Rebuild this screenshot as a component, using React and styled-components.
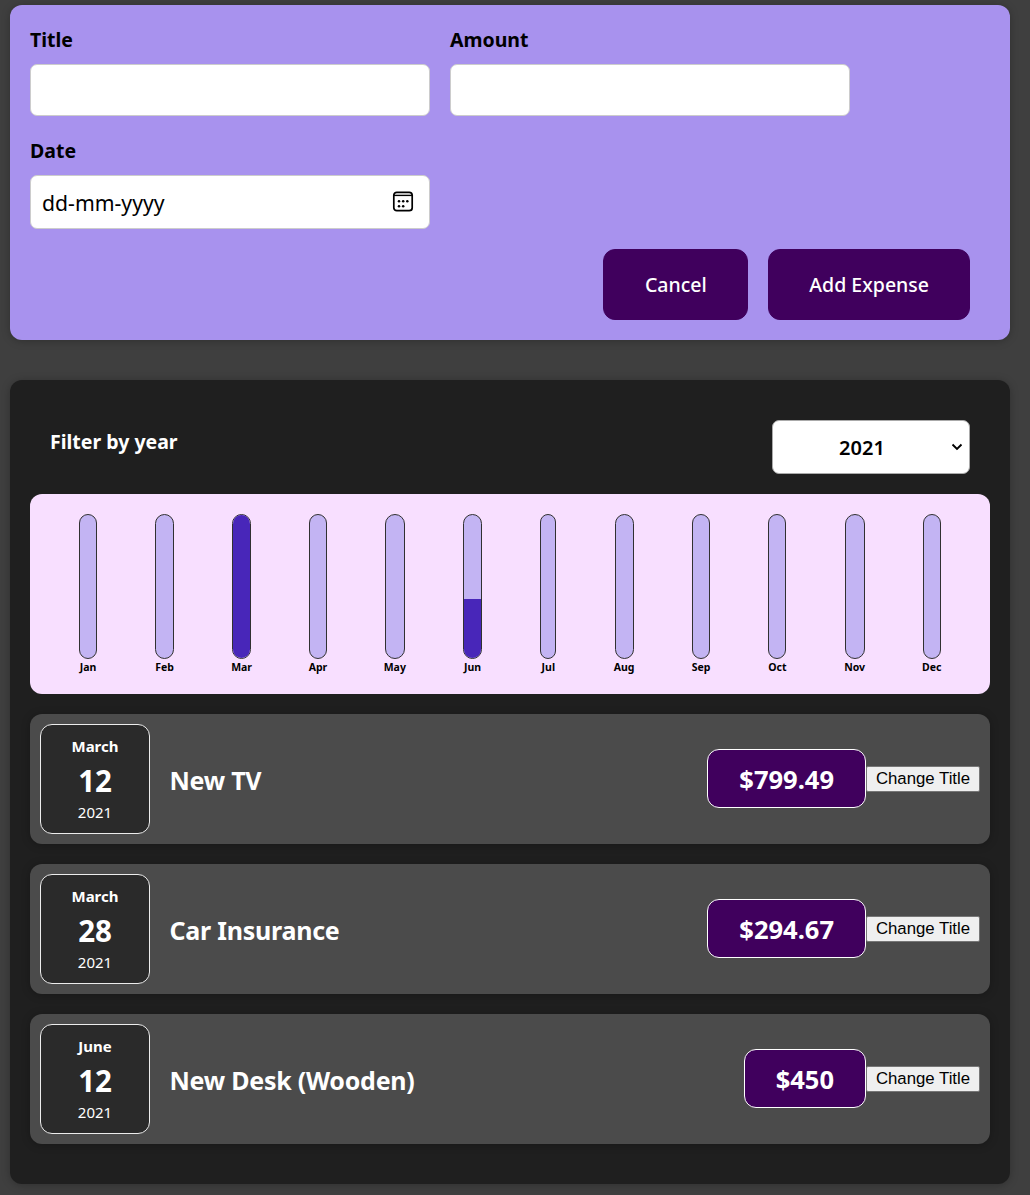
import React from 'react';
import styled, { createGlobalStyle } from 'styled-components';

const expenses = [
  { id: 'e1', title: 'New TV', amount: 799.49, price: '$799.49', month: 'March', day: '12', year: '2021' },
  { id: 'e2', title: 'Car Insurance', amount: 294.67, price: '$294.67', month: 'March', day: '28', year: '2021' },
  { id: 'e3', title: 'New Desk (Wooden)', amount: 450, price: '$450', month: 'June', day: '12', year: '2021' },
];

const months = [
  { label: 'Jan', width: 18 },
  { label: 'Feb', width: 18.6 },
  { label: 'Mar', width: 19, value: 799.49 + 294.67 },
  { label: 'Apr', width: 17.3 },
  { label: 'May', width: 20 },
  { label: 'Jun', width: 19, value: 450 },
  { label: 'Jul', width: 16.2 },
  { label: 'Aug', width: 19 },
  { label: 'Sep', width: 18.4 },
  { label: 'Oct', width: 18 },
  { label: 'Nov', width: 20 },
  { label: 'Dec', width: 18 },
];
const maxValue = 799.49 + 294.67;

const chevron =
  "url(\"data:image/svg+xml,%3Csvg xmlns='http://www.w3.org/2000/svg' width='12' height='8' viewBox='0 0 12 8'%3E%3Cpath d='M1.5 1.5 6 6l4.5-4.5' fill='none' stroke='%23000' stroke-width='1.9'/%3E%3C/svg%3E\")";

const GlobalStyle = createGlobalStyle`
  * {
    box-sizing: border-box;
  }

  body {
    margin: 0;
    background: #3f3f3f;
    font-family: "Noto Sans", "Open Sans", sans-serif;
  }
`;

const CalendarIcon = () => (
  <svg width="24" height="24" viewBox="0 0 24 24" fill="none">
    <rect x="2.8" y="2.3" width="18.4" height="18.4" rx="3" stroke="#000" strokeWidth="1.7" />
    <path d="M3 5.4h18" stroke="#000" strokeWidth="1.4" />
    <g fill="#000">
      <circle cx="8" cy="11.2" r="1.25" />
      <circle cx="12.2" cy="11.2" r="1.25" />
      <circle cx="16.3" cy="11.2" r="1.25" />
      <circle cx="8" cy="16.2" r="1.25" />
      <circle cx="12.2" cy="16.2" r="1.25" />
    </g>
  </svg>
);

export default function App() {
  return (
    <>
      <GlobalStyle />
      <Page>
        <ExpenseForm>
          <Controls>
            <Control>
              <Label>Title</Label>
              <TextInput type="text" />
            </Control>
            <Control>
              <Label>Amount</Label>
              <TextInput type="text" />
            </Control>
            <Control>
              <Label>Date</Label>
              <DateField>
                <span>dd-mm-yyyy</span>
                <CalendarIcon />
              </DateField>
            </Control>
          </Controls>
          <Actions>
            <ActionButton type="button">Cancel</ActionButton>
            <ActionButton type="submit">Add Expense</ActionButton>
          </Actions>
        </ExpenseForm>

        <ExpensesCard>
          <FilterRow>
            <FilterLabel>Filter by year</FilterLabel>
            <YearSelect defaultValue="2021">
              <option>2022</option>
              <option>2021</option>
              <option>2020</option>
              <option>2019</option>
            </YearSelect>
          </FilterRow>

          <Chart>
            {months.map((month) => (
              <ChartBar key={month.label} $width={month.width}>
                <BarTrack>
                  <BarFill style={{ height: `${((month.value || 0) / maxValue) * 100}%` }} />
                </BarTrack>
                <BarLabel>{month.label}</BarLabel>
              </ChartBar>
            ))}
          </Chart>

          <ExpenseList>
            {expenses.map((expense) => (
              <ExpenseItem key={expense.id}>
                <DateBox>
                  <DateMonth>{expense.month}</DateMonth>
                  <DateDay>{expense.day}</DateDay>
                  <DateYear>{expense.year}</DateYear>
                </DateBox>
                <ExpenseTitle>{expense.title}</ExpenseTitle>
                <Price>{expense.price}</Price>
                <ChangeButton type="button">Change Title</ChangeButton>
              </ExpenseItem>
            ))}
          </ExpenseList>
        </ExpensesCard>
      </Page>
    </>
  );
}

const Page = styled.div`
  display: flex;
  flex-direction: column;
  gap: 40px;
  width: 1000px;
  margin-left: 10px;
  padding: 5px 0 11px;
`;

const ExpenseForm = styled.form`
  display: flex;
  flex-direction: column;
  gap: 20px;
  height: 335px;
  padding: 20px 40px 20px 20px;
  background: #a892ee;
  border-radius: 12px;
  box-shadow: 0 1px 8px rgba(0, 0, 0, 0.25);
`;

const Controls = styled.div`
  display: flex;
  flex-wrap: wrap;
  gap: 20px;
`;

const Control = styled.div`
  display: flex;
  flex-direction: column;
  gap: 9px;
  width: 400px;
`;

const Label = styled.label`
  font-size: 19.5px;
  line-height: 30px;
  font-weight: 700;
  color: #000;
`;

const TextInput = styled.input`
  height: 52px;
  padding: 8px;
  background: #fff;
  border: 1px solid #ccc;
  border-radius: 7px;
`;

const DateField = styled.div`
  display: flex;
  align-items: center;
  justify-content: space-between;
  height: 54px;
  padding: 0 14px 0 11px;
  background: #fff;
  border: 1px solid #ccc;
  border-radius: 7px;
  font-size: 21.2px;
  color: #000;
`;

const Actions = styled.div`
  display: flex;
  justify-content: flex-end;
  gap: 20px;
`;

const ActionButton = styled.button`
  min-width: 145px;
  height: 71px;
  padding: 0 40px;
  background: #40005d;
  border: 1px solid #40005d;
  border-radius: 12px;
  color: #fff;
  font-family: inherit;
  font-size: 19.5px;
  font-weight: 500;
`;

const ExpensesCard = styled.div`
  display: flex;
  flex-direction: column;
  gap: 20px;
  padding: 40px 20px;
  background: #1f1f1f;
  border-radius: 12px;
  box-shadow: 0 1px 8px rgba(0, 0, 0, 0.25);
`;

const FilterRow = styled.div`
  display: flex;
  align-items: center;
  justify-content: space-between;
  padding: 0 20px;
  color: #fff;
`;

const FilterLabel = styled.label`
  margin-bottom: 12px;
  font-size: 19.5px;
  font-weight: 700;
`;

const YearSelect = styled.select`
  appearance: none;
  width: 198px;
  height: 54px;
  padding: 0 18px 0 0;
  background: #fff ${chevron} no-repeat right 6px center;
  border: 1px solid #aaa;
  border-radius: 7px;
  color: #000;
  font-family: inherit;
  font-size: 20px;
  font-weight: 600;
  text-align: center;
`;

const Chart = styled.div`
  display: flex;
  justify-content: space-around;
  height: 200px;
  padding: 20px;
  background: #f8dfff;
  border-radius: 12px;
`;

const ChartBar = styled.div`
  display: flex;
  flex-direction: column;
  align-items: center;
  width: ${(props) => props.$width}px;
  height: 100%;
`;

const BarTrack = styled.div`
  display: flex;
  flex-direction: column;
  justify-content: flex-end;
  flex: 1;
  width: 100%;
  overflow: hidden;
  background: #c3b4f3;
  border: 1px solid #313131;
  border-radius: 12px;
`;

const BarFill = styled.div`
  width: 100%;
  background: #4826b9;
`;

const BarLabel = styled.div`
  margin-top: 2px;
  font-size: 10.5px;
  line-height: 13px;
  font-weight: 700;
  text-align: center;
  color: #000;
`;

const ExpenseList = styled.div`
  display: flex;
  flex-direction: column;
  gap: 20px;
`;

const ExpenseItem = styled.div`
  display: flex;
  align-items: center;
  height: 130px;
  padding: 10px;
  background: #4b4b4b;
  border-radius: 12px;
  box-shadow: 0 1px 8px rgba(0, 0, 0, 0.25);
`;

const DateBox = styled.div`
  display: flex;
  flex-direction: column;
  align-items: center;
  justify-content: center;
  width: 110px;
  height: 110px;
  background: #2a2a2a;
  border: 1px solid #ececec;
  border-radius: 12px;
  color: #fff;
`;

const DateMonth = styled.div`
  font-size: 15px;
  line-height: 21px;
  font-weight: 700;
`;

const DateDay = styled.div`
  padding-top: 2px;
  font-size: 29.5px;
  line-height: 43px;
  font-weight: 700;
`;

const DateYear = styled.div`
  font-size: 15px;
  line-height: 20px;
`;

const ExpenseTitle = styled.h2`
  flex: 1;
  margin: 2px 0 0 19.5px;
  font-size: 25px;
  letter-spacing: -0.25px;
  font-weight: 700;
  color: #fff;
`;

const Price = styled.div`
  margin-bottom: 1px;
  padding: 13px 31px 11px;
  background: #40005d;
  border: 1px solid #fff;
  border-radius: 12px;
  color: #fff;
  font-size: 25.5px;
  line-height: 33px;
  font-weight: 700;
`;

const ChangeButton = styled.button`
  width: 114px;
  height: 26px;
  padding: 0;
  background: #efefef;
  border: 1px solid #767676;
  border-radius: 2px;
  color: #000;
  font-family: "Liberation Sans", Arial, sans-serif;
  font-size: 16.8px;
`;
